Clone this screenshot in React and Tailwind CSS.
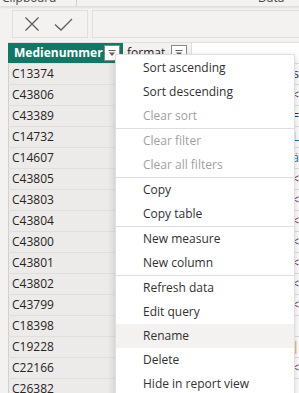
import React from "react";

const ROWS = [
  ["C13374", "s", "text-[#333]"],
  ["C43806", "<", "text-[#7a2f4a]"],
  ["C43389", "=", "text-[#333]"],
  ["C14732", "L", "text-[#1f5fbf]"],
  ["C14607", "ä", "text-[#2a6fbf]"],
  ["C43805", "<", "text-[#7a2f4a]"],
  ["C43803", "<", "text-[#7a2f4a]"],
  ["C43804", "<", "text-[#7a2f4a]"],
  ["C43800", "<", "text-[#7a2f4a]"],
  ["C43801", "<", "text-[#7a2f4a]"],
  ["C43802", "<", "text-[#7a2f4a]"],
  ["C43799", "<", "text-[#7a2f4a]"],
  ["C18398", "", "text-[#333]"],
  ["C19228", "|", "text-[#e8a23a]"],
  ["C22166", "<", "text-[#7a2f4a]"],
  ["C26382", "", "text-[#333]"],
];

// groups of menu items, separated by lines
const MENU = [
  [["Sort ascending"], ["Sort descending"], ["Clear sort", true]],
  [["Clear filter", true], ["Clear all filters", true]],
  [["Copy"], ["Copy table"]],
  [["New measure"], ["New column"]],
  [["Refresh data"], ["Edit query"], ["Rename", false, true], ["Delete"], ["Hide in report view"]],
];

function DropBtn() {
  return (
    <div className="w-[16px] h-[16px] bg-white border border-[#8a8886] flex items-center justify-center shrink-0">
      <svg width="8" height="7" viewBox="0 0 8 7">
        <rect x="0.5" y="0" width="7" height="1" fill="#605e5c" />
        <path d="M1 2.5 L7 2.5 L4 6 Z" fill="#605e5c" />
      </svg>
    </div>
  );
}

export default function App() {
  return (
    <div
      className="relative w-[299px] h-[393px] overflow-hidden bg-[#f3f2f1] text-[#252423]"
      style={{ fontFamily: '"Segoe UI", "Open Sans", "Noto Sans", sans-serif' }}
    >
      {/* ribbon bottom edge */}
      <div className="h-[7px] overflow-hidden flex border-b border-[#e1dfdd] shadow-[0_1px_2px_rgba(0,0,0,0.08)] text-[12px] text-[#484644]">
        <div className="w-[77px] border-r border-[#d2d0ce] pl-[2px] leading-[14px] -mt-[9px]">Clipboard</div>
        <div className="flex-1 pl-[181px] leading-[14px] -mt-[9px]">Data</div>
      </div>

      {/* formula bar */}
      <div className="flex gap-[4px] pl-[12px] mt-[3px] h-[28px]">
        <div className="w-[76px] border border-[#e1dfdd] flex items-center gap-[14px] pl-[11px]">
          <svg width="16" height="16" viewBox="0 0 16 16">
            <path d="M1.5 1.5 L14.5 14.5 M14.5 1.5 L1.5 14.5" stroke="#605e5c" strokeWidth="1.3" fill="none" />
          </svg>
          <svg width="19" height="13" viewBox="0 0 19 13">
            <path d="M1 6.5 L7 12 L18 1" stroke="#605e5c" strokeWidth="1.3" fill="none" />
          </svg>
        </div>
        <div className="flex-1 border border-[#e1dfdd] border-r-0" />
      </div>

      {/* table */}
      <div className="mt-[4px] ml-[8px] text-[12px]">
        <div className="flex h-[21px] border-t border-[#e1dfdd]">
          <div className="w-[115px] bg-[#117865] text-white font-bold flex items-center justify-between pl-[5px] pr-[3px] border-l border-[#117865]">
            <span>Medienummer</span>
            <DropBtn />
          </div>
          <div className="w-[69px] flex items-center justify-between pl-[4px] pr-[4px] border-r border-[#e1dfdd]">
            <span>format</span>
            <DropBtn />
          </div>
          <div className="flex-1 bg-white" />
        </div>
        {ROWS.map(([id, ch, color]) => (
          <div key={id} className="flex h-[21px] border-t border-[#e1dfdd]">
            <div className="w-[115px] bg-[#edebe9] border-l border-[#d2d0ce] pl-[3px] flex items-center">{id}</div>
            <div className="w-[69px] bg-white border-r border-[#e1dfdd]" />
            <div className={"flex-1 bg-white flex items-center pl-[103px] " + color}>{ch}</div>
          </div>
        ))}
      </div>

      {/* context menu */}
      <div className="absolute left-[115px] top-[54px] w-[180px] bg-white border border-[#e1dfdd] shadow-[0_3px_8px_rgba(0,0,0,0.18)] text-[12px] pt-[1px]">
        {MENU.map((group, gi) => (
          <div key={gi} className={gi > 0 ? "border-t border-[#e1dfdd]" : ""}>
            {group.map(([label, disabled, hover]) => (
              <div
                key={label}
                className={
                  "h-[24px] flex items-center pl-[27px] " +
                  (disabled ? "text-[#a19f9d] " : "text-[#323130] ") +
                  (hover ? "bg-[#f3f2f1]" : "")
                }
              >
                {label}
              </div>
            ))}
          </div>
        ))}
      </div>
    </div>
  );
}
